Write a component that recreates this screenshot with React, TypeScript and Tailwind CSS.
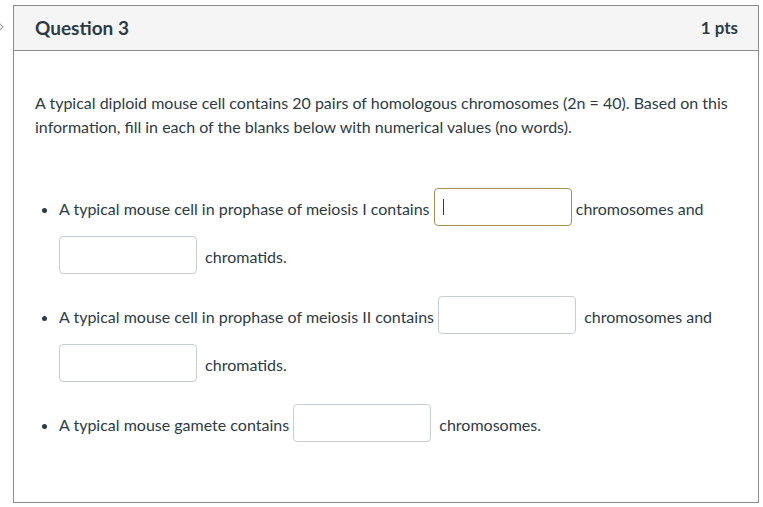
function Blank({ focused = false }: { focused?: boolean }) {
  return (
    <span
      className={
        'inline-block align-[-16px] w-[138px] h-[38px] my-[5px] rounded-[4px] border bg-white ' +
        (focused ? 'border-[#a8904f] relative' : 'border-[#c7cdd1] mr-1')
      }
    >
      {focused && <span className="absolute left-[8px] top-[10px] h-[16px] w-px bg-[#2d3b45]" />}
    </span>
  );
}

export default function App() {
  return (
    <div className="relative min-h-screen bg-white pt-[5px] pl-[13px] text-[#2d3b45] [font-family:Lato,'Open_Sans',sans-serif]">
      {/* cut-off chevron on the left edge */}
      <svg className="absolute left-[-4px] top-[21px]" width="9" height="12" viewBox="0 0 9 12">
        <path d="M2 1l5 5-5 5" fill="none" stroke="#9aa0a4" strokeWidth="1.2" />
      </svg>

      <div className="w-[746px] h-[498px] border border-[#8d8d8d]">
        {/* Header */}
        <div className="h-[45px] flex items-center justify-between bg-[#f5f5f5] border-b border-[#8d8d8d] pl-[21px] pr-[20px]">
          <h2 className="text-[19px] font-bold text-[#2d3b45]">Question 3</h2>
          <span className="text-[17px] font-bold text-[#2d3b45]">1 pts</span>
        </div>

        {/* Body */}
        <div className="pt-[40px] pl-[21px] pr-[20px] text-[16px] leading-6">
          <p>
            A typical diploid mouse cell contains 20 pairs of homologous chromosomes (2n = 40). Based on this
            information, fill in each of the blanks below with numerical values (no words).
          </p>

          <ul className="mt-[44px] list-disc pl-6 flex flex-col gap-3">
            <li>
              A typical mouse cell in prophase of meiosis I contains <Blank focused /> chromosomes and{' '}
              <Blank /> chromatids.
            </li>
            <li>
              A typical mouse cell in prophase of meiosis II contains <Blank /> chromosomes and <Blank />{' '}
              chromatids.
            </li>
            <li>
              A typical mouse gamete contains <Blank /> chromosomes.
            </li>
          </ul>
        </div>
      </div>
    </div>
  );
}
